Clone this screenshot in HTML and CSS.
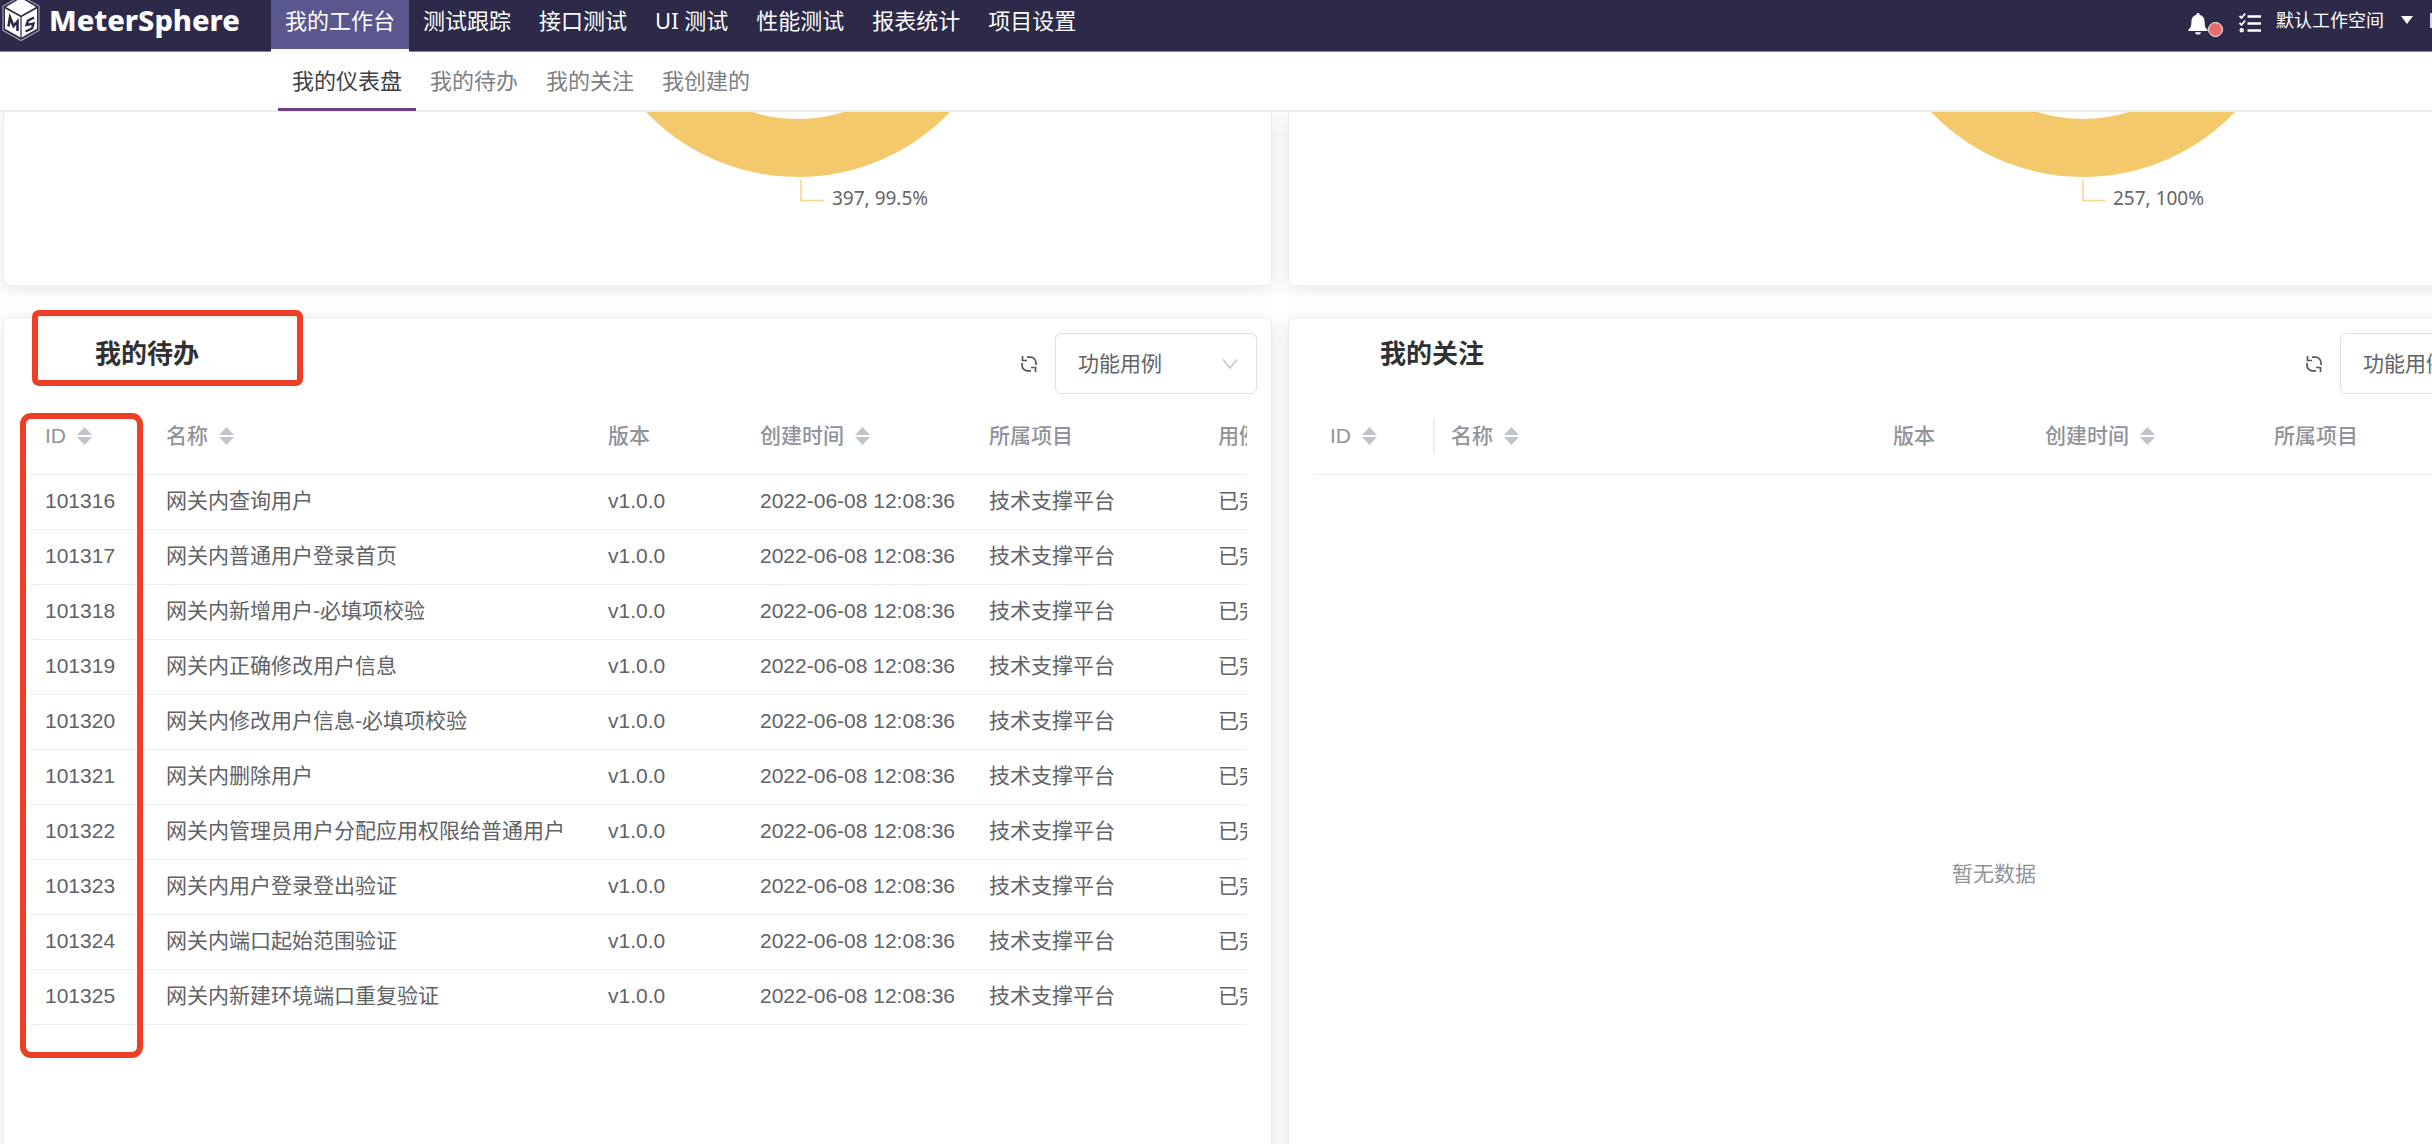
FILE: index.html
```html
<!DOCTYPE html>
<html lang="zh-CN">
<head>
<meta charset="utf-8">
<title>MeterSphere</title>
<link rel="stylesheet" href="styles.css">
</head>
<body>
<svg class="defs" width="0" height="0" aria-hidden="true">
  <symbol id="sort" viewBox="0 0 15 18"><path d="M7.5 0 15 8H0zM0 10h15l-7.500 8z" fill="#c0c4cc"/></symbol>
  <symbol id="chevron" viewBox="0 0 16 12"><path d="M1 1.500 8 10l7-8.500" fill="none" stroke="#c0c4cc" stroke-width="1.500"/></symbol>
  <symbol id="refresh" viewBox="0 0 18 18"><g fill="none" stroke="#55585e" stroke-width="1.700"><path d="M2.500 1v4.500H7"/><path d="M7 2.200h3.500a5.500 5.500 0 0 1 5.500 5.500V10"/><path d="M15.500 17v-4.500H11"/><path d="M11 15.800H7.500A5.500 5.500 0 0 1 2 10.300V8"/></g></symbol>
</svg>

<header class="topbar">
  <a class="brand" href="#">
    <svg width="42" height="42" viewBox="0 0 42 42" aria-hidden="true">
      <path d="M21-4 39 6v24.500L21 40.500 3 30.500V6z" fill="none" stroke="#a3a1b5" stroke-width="1.200"/>
      <path d="M21-2 36 7 21 15.500 6 7z" fill="#fff"/>
      <path d="M5 8.500 20.400 17v20.500L5 28.800z" fill="#fff"/>
      <path d="M37 8.500 21.600 17v20.500L37 28.800z" fill="#fff"/>
      <path d="M8.500 26.500 10 17.500l3.500 8.500 4-4.500v9.500" fill="none" stroke="#2c2a48" stroke-width="2.600"/>
      <path d="M34 17.500l-6 3.200-1.500 4.300 7-1.500-1.500 5-6.500 3" fill="none" stroke="#2c2a48" stroke-width="2.400"/>
    </svg>
    <span class="brand-name">MeterSphere</span>
  </a>
  <nav class="menu">
    <a class="active" href="#">我的工作台</a>
    <a href="#">测试跟踪</a>
    <a href="#">接口测试</a>
    <a href="#">UI 测试</a>
    <a href="#">性能测试</a>
    <a href="#">报表统计</a>
    <a href="#">项目设置</a>
  </nav>
  <div class="tools">
    <button class="bell" type="button" aria-label="通知">
      <svg width="20" height="22" viewBox="0 0 20 22"><path d="M10 0c1 0 1.600.7 1.600 1.700C15 2.500 16.600 5 16.600 8.500c0 4.500.7 6.500 3 8V18H.4v-1.500c2.300-1.500 3-3.500 3-8C3.400 5 5 2.500 8.400 1.700 8.400.7 9 0 10 0zM7 19.300h6c-.3 1.500-1.400 2.300-3 2.300s-2.700-.8-3-2.300z" fill="#fff"/></svg>
      <span class="dot"></span>
    </button>
    <button class="tasks" type="button" aria-label="任务">
      <svg width="22" height="20" viewBox="0 0 22 20"><g fill="none" stroke="#fff"><path d="M8.500 3.500H22M8.500 10.500H22M8.500 17.500H22" stroke-width="2.400"/><path d="m.5 3 2 2 3.700-4.500M.5 10l2 2 3.700-4.500" stroke-width="1.800"/></g><circle cx="2.700" cy="17.300" r="2.200" fill="#fff"/></svg>
    </button>
    <button class="workspace" type="button">默认工作空间
      <svg width="12" height="8" viewBox="0 0 12 8" aria-hidden="true"><path d="M0 0h12L6 8z" fill="#fff"/></svg>
    </button>
    <span class="tool-edge"></span>
  </div>
</header>

<nav class="submenu">
  <a class="active" href="#">我的仪表盘</a>
  <a href="#">我的待办</a>
  <a href="#">我的关注</a>
  <a href="#">我创建的</a>
</nav>

<main class="board">
  <section class="card chart">
    <svg width="320" height="119" viewBox="0 0 320 119">
      <circle cx="159" cy="-145" r="181" fill="none" stroke="#f4c96b" stroke-width="58"/>
      <path d="M162 68v20.500h23" fill="none" stroke="#f6d58c" stroke-width="1.500"/>
      <text x="193" y="93">397, 99.5%</text>
    </svg>
  </section>
  <section class="card chart">
    <svg width="320" height="119" viewBox="0 0 320 119">
      <circle cx="159" cy="-145" r="181" fill="none" stroke="#f4c96b" stroke-width="58"/>
      <path d="M159 68v20.500h23" fill="none" stroke="#f6d58c" stroke-width="1.500"/>
      <text x="189" y="93">257, 100%</text>
    </svg>
  </section>

  <section class="card list">
    <div class="list-head">
      <h2>我的待办</h2>
      <button class="refresh" type="button" aria-label="刷新"><svg width="18" height="18"><use href="#refresh"/></svg></button>
      <div class="picker">
        <select aria-label="待办类型"><option>功能用例</option></select>
        <svg width="16" height="12" aria-hidden="true"><use href="#chevron"/></svg>
      </div>
    </div>
    <div class="scroll">
      <table>
        <colgroup><col class="c-id"><col class="c-name"><col class="c-ver"><col class="c-time"><col class="c-proj"><col></colgroup>
        <thead><tr>
          <th>ID<svg width="15" height="18"><use href="#sort"/></svg></th>
          <th>名称<svg width="15" height="18"><use href="#sort"/></svg></th>
          <th>版本</th>
          <th>创建时间<svg width="15" height="18"><use href="#sort"/></svg></th>
          <th>所属项目</th>
          <th>用例状态</th>
        </tr></thead>
        <tbody>
          <tr><td>101316</td><td>网关内查询用户</td><td>v1.0.0</td><td>2022-06-08 12:08:36</td><td>技术支撑平台</td><td>已完成</td></tr>
          <tr><td>101317</td><td>网关内普通用户登录首页</td><td>v1.0.0</td><td>2022-06-08 12:08:36</td><td>技术支撑平台</td><td>已完成</td></tr>
          <tr><td>101318</td><td>网关内新增用户-必填项校验</td><td>v1.0.0</td><td>2022-06-08 12:08:36</td><td>技术支撑平台</td><td>已完成</td></tr>
          <tr><td>101319</td><td>网关内正确修改用户信息</td><td>v1.0.0</td><td>2022-06-08 12:08:36</td><td>技术支撑平台</td><td>已完成</td></tr>
          <tr><td>101320</td><td>网关内修改用户信息-必填项校验</td><td>v1.0.0</td><td>2022-06-08 12:08:36</td><td>技术支撑平台</td><td>已完成</td></tr>
          <tr><td>101321</td><td>网关内删除用户</td><td>v1.0.0</td><td>2022-06-08 12:08:36</td><td>技术支撑平台</td><td>已完成</td></tr>
          <tr><td>101322</td><td>网关内管理员用户分配应用权限给普通用户</td><td>v1.0.0</td><td>2022-06-08 12:08:36</td><td>技术支撑平台</td><td>已完成</td></tr>
          <tr><td>101323</td><td>网关内用户登录登出验证</td><td>v1.0.0</td><td>2022-06-08 12:08:36</td><td>技术支撑平台</td><td>已完成</td></tr>
          <tr><td>101324</td><td>网关内端口起始范围验证</td><td>v1.0.0</td><td>2022-06-08 12:08:36</td><td>技术支撑平台</td><td>已完成</td></tr>
          <tr><td>101325</td><td>网关内新建环境端口重复验证</td><td>v1.0.0</td><td>2022-06-08 12:08:36</td><td>技术支撑平台</td><td>已完成</td></tr>
        </tbody>
      </table>
    </div>
    <div class="mark mark-title"></div>
    <div class="mark mark-ids"></div>
  </section>

  <section class="card list">
    <div class="list-head">
      <h2>我的关注</h2>
      <button class="refresh" type="button" aria-label="刷新"><svg width="18" height="18"><use href="#refresh"/></svg></button>
      <div class="picker">
        <select aria-label="关注类型"><option>功能用例</option></select>
        <svg width="16" height="12" aria-hidden="true"><use href="#chevron"/></svg>
      </div>
    </div>
    <div class="scroll">
      <table>
        <colgroup><col class="c-id"><col class="c-name"><col class="c-ver"><col class="c-time"><col class="c-proj"><col></colgroup>
        <thead><tr>
          <th class="grip">ID<svg width="15" height="18"><use href="#sort"/></svg></th>
          <th>名称<svg width="15" height="18"><use href="#sort"/></svg></th>
          <th>版本</th>
          <th>创建时间<svg width="15" height="18"><use href="#sort"/></svg></th>
          <th>所属项目</th>
          <th>用例状态</th>
        </tr></thead>
      </table>
      <p class="empty">暂无数据</p>
    </div>
  </section>
</main>
</body>
</html>
```
FILE: styles.css
```css
* { box-sizing: border-box; }

body {
  margin: 0;
  height: 100vh;
  overflow: hidden;
  background: #fff;
  color: #606266;
  font: 21px/30px "Liberation Sans", "Noto Sans CJK SC", sans-serif;
}

a { color: inherit; text-decoration: none; }
button { padding: 0; border: 0; background: none; color: inherit; font: inherit; }
svg { display: block; }
.defs { position: absolute; }

/* top bar */
.topbar {
  display: flex;
  height: 52px;
  border-bottom: 1px solid #85829a;
  background: #2c2a48;
  color: #fff;
  font-family: "Noto Sans", "Noto Sans CJK SC", sans-serif;
}
.brand { display: flex; gap: 7px; width: 271px; }
.brand-name { font-size: 29px; font-weight: 800; line-height: 40px; }
.menu { display: flex; font-size: 22px; line-height: 40px; }
.menu a { height: 49px; padding: 0 14px; }
.menu .active {
  height: 52px;
  border-bottom: 3px solid #fff;
  background: #59578e;
}
.tools {
  display: flex;
  align-items: center;
  height: 40px;
  margin-left: auto;
  font-size: 18px;
}
.bell { position: relative; margin-right: 31px; padding-top: 8px; }
.dot {
  position: absolute;
  left: 20px;
  top: 17px;
  width: 15px;
  height: 15px;
  border: 1px solid #fff;
  border-radius: 50%;
  background: #e96b6b;
}
.tasks { margin-right: 15px; padding-top: 6px; }
.workspace { display: flex; align-items: center; gap: 17px; margin-right: 17px; }
.tool-edge { width: 2px; height: 15px; background: #d8d8de; }

/* second level menu */
.submenu {
  display: flex;
  height: 60px;
  padding-left: 278px;
  border-bottom: 2px solid #ececee;
  background: #fff;
  color: #7d7f83;
  font-size: 22px;
  line-height: 60px;
}
.submenu a { height: 59px; padding: 0 14px; }
.submenu .active { border-bottom: 3px solid #6f3f88; color: #404246; }

/* dashboard cards; the board is wider than the window and runs off its right edge */
.board {
  display: grid;
  grid-template-columns: 1fr 1fr;
  gap: 31px 16px;
  width: calc(100% + 128px);
  padding: 0 3px;
}
.card {
  position: relative;
  min-width: 0;
  border: 1px solid #ebeef5;
  border-radius: 6px;
  background: #fff;
  box-shadow: 0 3px 18px rgba(0, 0, 0, .1);
}
.chart {
  padding: 0 0 54px 50%;
  border-top: 0;
  border-radius: 0 0 6px 6px;
  clip-path: inset(0 -20px -20px -20px);
}
.chart text { fill: #666; font: 19px "Noto Sans", sans-serif; }

.list { padding: 15px 24px 0 25px; }
.list-head { display: flex; align-items: center; margin-right: -10px; margin-bottom: 4px; }
.list-head h2 {
  margin: 0 auto 24px 66px;
  color: #303133;
  font: bold 26px/36px "Noto Sans CJK SC", sans-serif;
}
.refresh { margin-right: 17px; }
.picker { position: relative; width: 202px; }
.picker select {
  display: block;
  width: 100%;
  height: 61px;
  padding: 0 22px;
  appearance: none;
  border: 1px solid #dcdfe6;
  border-radius: 6px;
  background: #fff;
  color: #606266;
  font: inherit;
}
.picker svg { position: absolute; right: 19px; top: 25px; }

.scroll { overflow: hidden; }
table { width: 1360px; table-layout: fixed; border-collapse: collapse; white-space: nowrap; }
.c-id { width: 121px; }
.c-name { width: 442px; }
.c-ver { width: 152px; }
.c-time, .c-proj { width: 229px; }
th, td { height: 55px; padding: 0 16px; border-bottom: 1px solid #ebeef5; text-align: left; }
th { height: 76px; color: #909399; font-weight: 500; }
td { padding-bottom: 2px; }
th svg { display: inline-block; margin-left: 11px; vertical-align: -2px; }
.grip {
  background: linear-gradient(#ebeef5, #ebeef5) right center / 2px 35px no-repeat;
}
.empty {
  display: flex;
  align-items: center;
  justify-content: center;
  width: 1360px;
  height: 798px;
  margin: 0;
  color: #909399;
}

/* red highlight frames drawn over the list */
.mark { position: absolute; border: 6px solid #ec3f26; pointer-events: none; }
.mark-title { left: 28px; top: -8px; width: 271px; height: 76px; border-radius: 7px; }
.mark-ids { left: 16px; top: 95px; width: 123px; height: 645px; border-radius: 11px; }
```
